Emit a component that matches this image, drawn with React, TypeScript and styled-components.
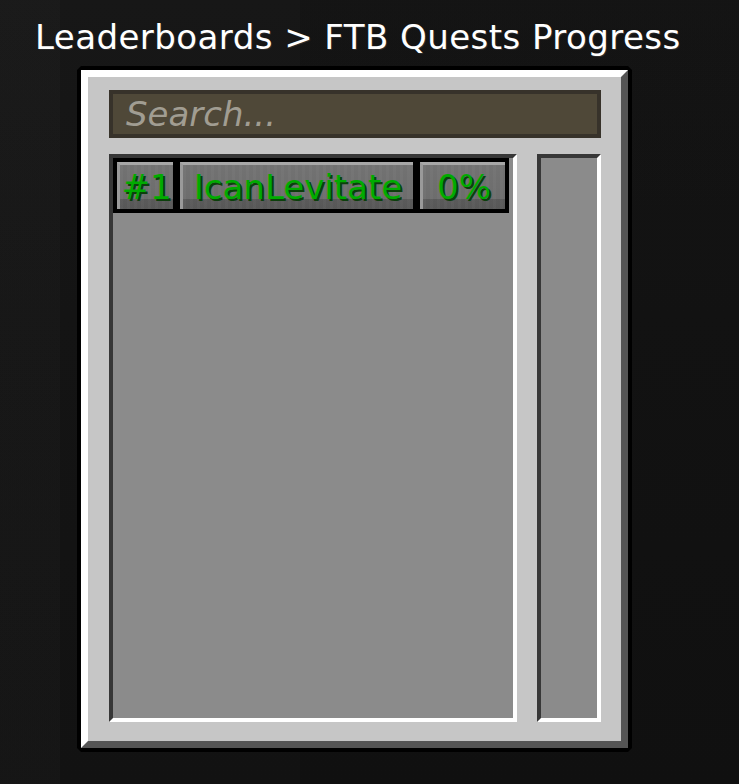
import React from "react";
import styled, { createGlobalStyle } from "styled-components";

const GlobalStyle = createGlobalStyle`
  html, body {
    margin: 0;
    padding: 0;
    background: #141414;
  }

  body {
    font-family: "DejaVu Sans", Verdana, sans-serif;
  }
`;

const Screen = styled.div`
  width: 739px;
  height: 784px;
  overflow: hidden;
  box-sizing: border-box;
  padding-top: 17px;
  background:
    linear-gradient(90deg, rgba(255, 255, 255, 0.015) 0 60px, transparent 60px 300px, rgba(0, 0, 0, 0.12) 300px),
    linear-gradient(180deg, #171717 0%, #141414 40%, #121212 100%);
`;

const Breadcrumb = styled.h1`
  margin: 0 0 9px 35px;
  font-size: 34px;
  font-weight: normal;
  line-height: 40px;
  letter-spacing: 0.45px;
  color: #ffffff;
  text-shadow: 1px 1px 0 #2b2b2b;
  white-space: nowrap;
`;

// Minecraft style frame: black outline, white highlight top/left, dark shade bottom/right
const Frame = styled.div`
  margin-left: 77px;
  width: 555px;
  height: 686px;
  box-sizing: border-box;
  border: 4px solid #000;
  clip-path: polygon(
    4px 0, calc(100% - 4px) 0, 100% 4px, 100% calc(100% - 4px),
    calc(100% - 4px) 100%, 4px 100%, 0 calc(100% - 4px), 0 4px
  );
`;

const FrameBody = styled.div`
  height: 100%;
  box-sizing: border-box;
  border-style: solid;
  border-width: 7px;
  border-color: #ffffff #555555 #555555 #ffffff;
  background: #c6c6c6;
  padding: 13px 20px 19px 21px;
  display: flex;
  flex-direction: column;
  gap: 16px;
`;

const SearchBox = styled.div`
  height: 48px;
  box-sizing: border-box;
  border: 4px solid #37322a;
  background: #4f4838;
  padding-left: 13px;
  font-style: italic;
  font-size: 34px;
  line-height: 40px;
  color: #a19d92;
`;

const Body = styled.div`
  flex: 1;
  display: flex;
  gap: 20px;
`;

const Inset = styled.div<{ $width?: number }>`
  box-sizing: border-box;
  border-style: solid;
  border-width: 4px;
  border-color: #373737 #ffffff #ffffff #373737;
  background: #8b8b8b;
  ${({ $width }) => ($width ? `width: ${$width}px;` : "flex: 1;")}
`;

const Row = styled.div`
  display: inline-flex;
  gap: 7px;
  padding: 4px;
  background: #000;
`;

const Cell = styled.div<{ $width: number }>`
  width: ${({ $width }) => $width}px;
  height: 47px;
  box-sizing: border-box;
  border-top: 3px solid #a7a7a7;
  border-left: 3px solid #9a9a9a;
  padding-top: 1px;
  background:
    repeating-linear-gradient(90deg, rgba(255, 255, 255, 0.015) 0 3px, rgba(0, 0, 0, 0.02) 3px 7px),
    linear-gradient(180deg, #747474 0%, #6f6f6f 78%, #5c5c5c 78%, #595959 100%);
  font-size: 34px;
  line-height: 43px;
  text-align: center;
  color: #00ab00;
  text-shadow: 2px 2px 0 #0c400c;
  white-space: nowrap;
`;

type Entry = {
  rank: number;
  name: string;
  progress: number;
};

const entries: Entry[] = [{ rank: 1, name: "IcanLevitate", progress: 0 }];

export default function App() {
  return (
    <Screen>
      <GlobalStyle />
      <Breadcrumb>Leaderboards &gt; FTB Quests Progress</Breadcrumb>
      <Frame>
        <FrameBody>
          <SearchBox>Search...</SearchBox>
          <Body>
            <Inset>
              {entries.map((e) => (
                <Row key={e.rank}>
                  <Cell $width={56}>#{e.rank}</Cell>
                  <Cell $width={233}>{e.name}</Cell>
                  <Cell $width={85}>{e.progress}%</Cell>
                </Row>
              ))}
            </Inset>
            <Inset $width={64} />
          </Body>
        </FrameBody>
      </Frame>
    </Screen>
  );
}
